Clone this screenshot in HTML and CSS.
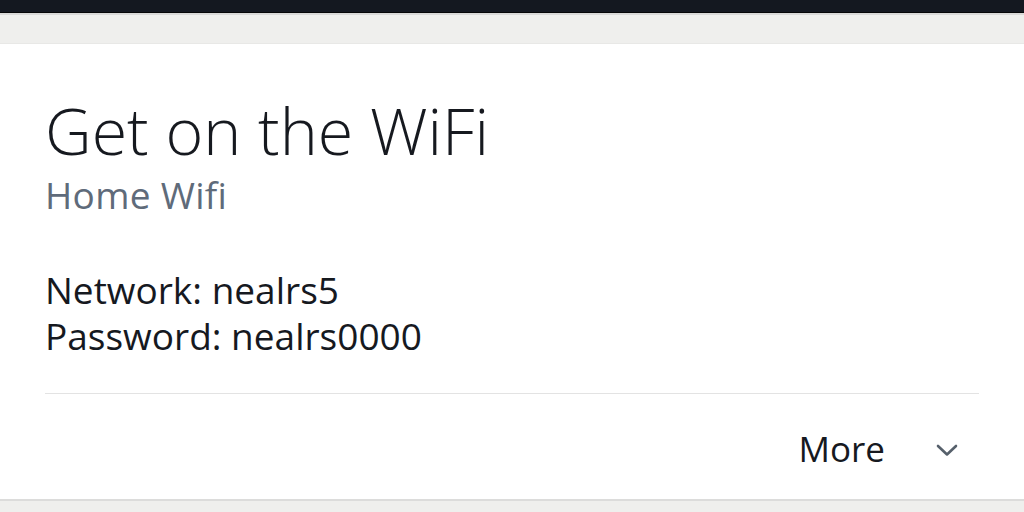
FILE: index.html
```html
<!DOCTYPE html>
<html lang="en">
  <head>
    <meta charset="UTF-8" />
    <meta name="viewport" content="width=device-width, initial-scale=1.0" />
    <title>Get on the WiFi</title>

    <link rel="stylesheet" href="styles.css">
  </head>

  <body>
    <div class="topbar"></div>

    <div class="page">
      <div class="card">
        <h1 class="card__title">Get on the WiFi</h1>
        <p class="card__sub">Home Wifi</p>

        <div class="card__body">
          <p>Network: nealrs5</p>
          <p>Password: nealrs0000</p>
        </div>

        <div class="card__footer">
          <button class="more">
            <span>More</span>
            <svg class="more__icon" width="22" height="13" viewBox="0 0 22 13">
              <path d="M2 2 L11 10.5 L20 2" fill="none" stroke="#56606b" stroke-width="2.6" stroke-linecap="round" stroke-linejoin="round" />
            </svg>
          </button>
        </div>
      </div>
    </div>
  </body>
</html>
```

FILE: styles.css
```css
* {
  margin: 0;
  padding: 0;
  box-sizing: border-box;
}

body {
  font-family: "Open Sans", "Noto Sans", sans-serif;
  color: #16191f;
  background: #efefed;
  height: 512px;
  overflow: hidden;
}

.topbar {
  height: 13px;
  background: #141820;
  border-bottom: 1px solid #050608;
}

.page {
  border-top: 2px solid #d9d9d8;
  padding-top: 28px;
}

.card {
  background: #fff;
  padding: 50px 45px 0;
  border-top: 1px solid #e8e8e6;
  border-bottom: 2px solid #dcdcdb;
}

.card__title {
  font-size: 64.5px;
  font-weight: 300;
  line-height: 72px;
}

.card__sub {
  margin-top: 7px;
  font-size: 37px;
  line-height: 44px;
  letter-spacing: 0.3px;
  color: #5f6b7a;
}

.card__body {
  margin-top: 50px;
  padding-bottom: 34px;
  font-size: 37px;
  line-height: 46px;
}

.card__footer {
  border-top: 1px solid #e3e3e3;
  padding: 32px 21px 27px 0;
  display: flex;
  justify-content: flex-end;
}

.more {
  display: flex;
  align-items: center;
  gap: 51px;
  border: none;
  background: none;
  font-family: inherit;
  font-size: 35px;
  line-height: 46px;
  color: #16191f;
  cursor: pointer;
}

.more__icon {
  margin-top: 2px;
}
```
